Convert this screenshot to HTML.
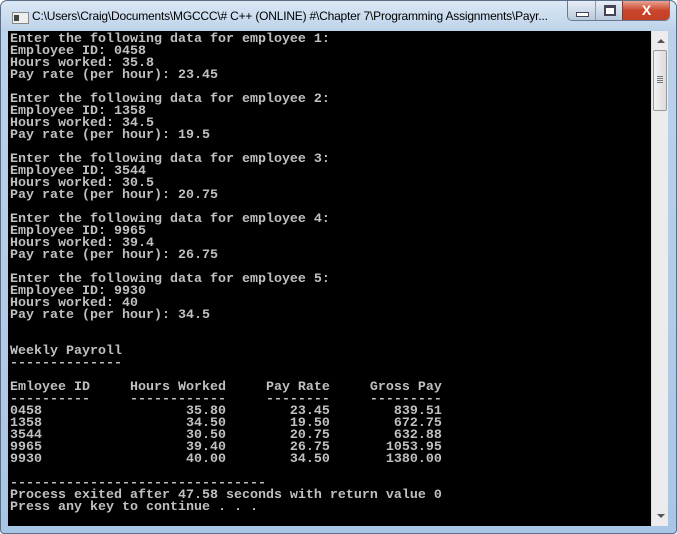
<!DOCTYPE html>
<html><head><meta charset="utf-8"><style>
html,body{margin:0;padding:0;width:677px;height:534px;overflow:hidden;background:#fff}
.win{position:absolute;left:0;top:0;width:675px;height:532px;border:1px solid #5a6e86;border-radius:7px 7px 4px 4px;
background:linear-gradient(#dbe8f5,#bcd2ea 30px,#a9c6e6 100%);}
.title{position:absolute;left:31px;top:8px;font:12px "Liberation Sans",sans-serif;color:#000;white-space:nowrap;letter-spacing:-0.2px}
.icon{position:absolute;left:11px;top:11px;width:15px;height:10px;background:#eee;border:1px solid #888}
.icon:before{content:"";position:absolute;left:1px;top:2px;width:5px;height:6px;background:#444}
.btns{position:absolute;left:566px;top:0;width:101px;height:19px;border:1px solid #6a7a8e;border-top:none;border-radius:0 0 5px 5px;overflow:hidden}
.b{position:absolute;top:0;height:19px}
.min{left:0;width:27px;background:linear-gradient(#e6eef7,#b9c9dc)}
.max{left:27px;width:27px;background:linear-gradient(#e6eef7,#b9c9dc);border-left:1px solid #8a9ab0}
.cls{left:54px;width:47px;background:linear-gradient(#e8a493,#c9452c 50%,#c24024);border-left:1px solid #8a3a2a}
.min:after{content:"";position:absolute;left:8px;top:11px;width:11px;height:3px;background:#fff;border:1px solid #445}
.max:after{content:"";position:absolute;left:8px;top:4px;width:8px;height:6px;border:2px solid #445;border-top-width:3px;background:#fff}
.cls span{position:absolute;left:0;right:0;top:0;text-align:center;font:bold 14px "Liberation Sans",sans-serif;color:#fff;line-height:18px}
.con{position:absolute;left:8px;top:31px;width:643px;height:495px;background:#000}
pre{margin:0;position:absolute;left:2px;top:3px;font:bold 13.33px/12px "Liberation Mono",monospace;color:#c0c0c0}
.sb{position:absolute;left:651px;top:31px;width:16px;height:495px;background:#ececec;border-left:1px solid #ddd}
.thumb{position:absolute;left:1px;top:19px;width:12px;height:59px;border:1px solid #999;border-radius:2px;background:linear-gradient(90deg,#f2f2f2,#dcdcdc)}
.grip{position:absolute;left:3px;top:25px;width:6px;height:7px;background:repeating-linear-gradient(#777 0 1px,transparent 1px 2px)}
.up,.dn{position:absolute;left:5px;width:0;height:0;border-left:4px solid transparent;border-right:4px solid transparent}
.up{top:8px;border-bottom:4px solid #555}
.dn{bottom:8px;border-top:4px solid #555}
</style></head><body>
<div class="win">
<div class="icon"></div>
<div class="title">C:\Users\Craig\Documents\MGCCC\# C++ (ONLINE) #\Chapter 7\Programming Assignments\Payr...</div>
<div class="btns"><div class="b min"></div><div class="b max"></div><div class="b cls"><span>X</span></div></div>
</div>
<div class="con"><pre>Enter the following data for employee 1:
Employee ID: 0458
Hours worked: 35.8
Pay rate (per hour): 23.45

Enter the following data for employee 2:
Employee ID: 1358
Hours worked: 34.5
Pay rate (per hour): 19.5

Enter the following data for employee 3:
Employee ID: 3544
Hours worked: 30.5
Pay rate (per hour): 20.75

Enter the following data for employee 4:
Employee ID: 9965
Hours worked: 39.4
Pay rate (per hour): 26.75

Enter the following data for employee 5:
Employee ID: 9930
Hours worked: 40
Pay rate (per hour): 34.5


Weekly Payroll
--------------

Emloyee ID     Hours Worked     Pay Rate     Gross Pay
----------     ------------     --------     ---------
0458                  35.80        23.45        839.51
1358                  34.50        19.50        672.75
3544                  30.50        20.75        632.88
9965                  39.40        26.75       1053.95
9930                  40.00        34.50       1380.00

--------------------------------
Process exited after 47.58 seconds with return value 0
Press any key to continue . . .</pre></div>
<div class="sb"><div class="up"></div><div class="thumb"><div class="grip"></div></div><div class="dn"></div></div>
</body></html>
